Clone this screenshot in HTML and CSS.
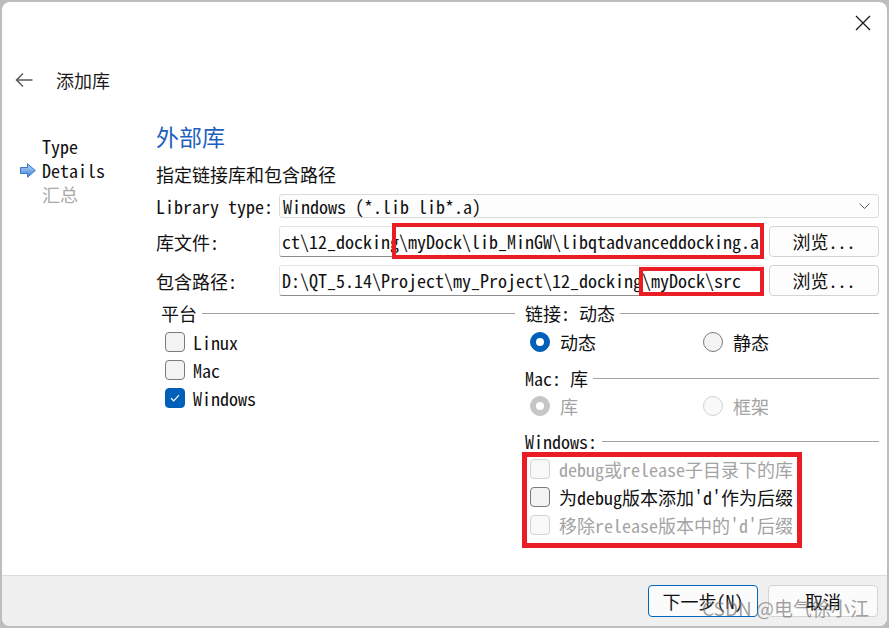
FILE: index.html
```html
<!DOCTYPE html>
<html lang="zh-CN">
<head>
<meta charset="utf-8">
<title>添加库</title>
<link rel="stylesheet" href="styles.css">
</head>
<body>
<div class="window">
  <div class="titlebar">
    <button class="close" aria-label="关闭">
      <svg width="16" height="16" viewBox="0 0 16 16"><path d="M1 1L15 15M15 1L1 15" stroke="#1a1a1a" stroke-width="1.3" fill="none"/></svg>
    </button>
  </div>
  <div class="header">
    <svg class="back" width="18" height="16" viewBox="0 0 18 16"><path d="M17.5 8H1.5M8 1.5L1.5 8L8 14.5" stroke="#5a5a5a" stroke-width="1.5" fill="none"/></svg>
    <span class="title">添加库</span>
  </div>
  <div class="main">
    <nav class="steps">
      <div class="step"><span class="marker"></span>Type</div>
      <div class="step"><span class="marker"><svg width="16" height="15" viewBox="0 0 16 15"><defs><linearGradient id="ag" x1="0" y1="0" x2="0" y2="1"><stop offset="0" stop-color="#b5d5f7"/><stop offset="1" stop-color="#3f82da"/></linearGradient></defs><path d="M0.5 4.5H7.5V0.8L15.3 7.5L7.5 14.2V10.5H0.5Z" fill="url(#ag)" stroke="#3a73c4" stroke-width="1"/></svg></span>Details</div>
      <div class="step future"><span class="marker"></span>汇总</div>
    </nav>
    <section class="content">
      <h1 class="heading">外部库</h1>
      <p class="sub">指定链接库和包含路径</p>
      <div class="form">
        <span class="label">Library type:</span>
        <div class="combo"><span>Windows (*.lib lib*.a)</span><svg width="11" height="6" viewBox="0 0 11 6"><path d="M0.5 0.5L5.5 5.5L10.5 0.5" stroke="#5f5f5f" stroke-width="1" fill="none"/></svg></div>
        <span class="label">库文件:</span>
        <div class="field"><div class="input">ct\12_docking\myDock\lib_MinGW\libqtadvanceddocking.a</div><button class="btn">浏览...</button></div>
        <span class="label">包含路径:</span>
        <div class="field"><div class="input">D:\QT_5.14\Project\my_Project\12_docking\myDock\src</div><button class="btn">浏览...</button></div>
      </div>
      <div class="groups">
        <div class="group">
          <div class="gtitle"><span>平台</span></div>
          <div class="item"><span class="box"></span>Linux</div>
          <div class="item"><span class="box"></span>Mac</div>
          <div class="item"><span class="box on"><svg width="10" height="8" viewBox="0 0 10 8"><path d="M1 4.2L3.7 6.8L9 1.2" stroke="#fff" stroke-width="1.2" fill="none"/></svg></span>Windows</div>
        </div>
        <div class="group right">
          <div class="gtitle"><span>链接: 动态</span></div>
          <div class="radios">
            <div class="item"><span class="radio on"></span>动态</div>
            <div class="item"><span class="radio"></span>静态</div>
          </div>
          <div class="gtitle next"><span>Mac: 库</span></div>
          <div class="radios">
            <div class="item disabled"><span class="radio on"></span>库</div>
            <div class="item disabled"><span class="radio"></span>框架</div>
          </div>
          <div class="gtitle next2"><span>Windows:</span></div>
          <div class="item win disabled"><span class="box"></span>debug或release子目录下的库</div>
          <div class="item win"><span class="box"></span>为debug版本添加'd'作为后缀</div>
          <div class="item win disabled"><span class="box"></span>移除release版本中的'd'后缀</div>
        </div>
      </div>
    </section>
  </div>
  <div class="footer">
    <button class="btn default">下一步(N)</button>
    <button class="btn">取消</button>
  </div>
  <div class="mark m1"></div>
  <div class="mark m2"></div>
  <div class="mark m3"></div>
  <div class="watermark">CSDN @电气徐小江</div>
</div>
</body>
</html>
```

FILE: styles.css
```css
:root {
  --mono: "Noto Sans Mono CJK SC", "Liberation Mono", "Noto Sans CJK SC", monospace;
  --sans: "Noto Sans CJK SC", "Noto Sans", sans-serif;
}
* { box-sizing: border-box; }
html, body { margin: 0; }
body {
  width: 889px;
  height: 628px;
  overflow: hidden;
  background: #bdbdbd;
  font-family: var(--mono);
  font-size: 18px;
  color: #111;
}
button { font: inherit; color: inherit; }
.window {
  position: relative;
  margin: 2px 0 0 2px;
  width: 885px;
  height: 624px;
  background: #fff;
  border-radius: 8px;
  overflow: hidden;
  display: flex;
  flex-direction: column;
}
.titlebar {
  height: 40px;
  display: flex;
  justify-content: flex-end;
  padding: 13px 16px 0 0;
}
.close {
  width: 16px; height: 16px; padding: 0; border: 0; background: none; display: block;
}
.close svg { display: block; }
.header {
  margin-top: 18px;
  height: 40px;
  display: flex;
  align-items: center;
  padding-left: 13px;
}
.back { display: block; }
.title {
  margin-left: 23px;
  font-family: var(--sans);
  font-size: 18px;
  color: #1a1a1a;
}
.main {
  flex: 1;
  display: flex;
  padding: 0 8px 0 18px;
}
.steps {
  width: 136px;
  padding-top: 34px;
}
.step {
  height: 24px;
  line-height: 24px;
  display: flex;
  align-items: center;
}
.step .marker {
  width: 22px;
  display: flex;
  align-items: center;
}
.step .marker svg { display: block; }
.step.future { color: #aaa; }
.content {
  flex: 1;
  padding-top: 21px;
}
.heading {
  margin: 0;
  font-family: var(--sans);
  font-weight: 400;
  font-size: 23px;
  line-height: 30px;
  color: #1f5fbf;
}
.sub {
  margin: 11px 0 0;
  line-height: 24px;
}
.form {
  margin-top: 8px;
  display: grid;
  grid-template-columns: 123px 1fr;
  row-gap: 8px;
  align-items: center;
}
.label { line-height: 24px; white-space: nowrap; }
.combo {
  height: 24px;
  border: 1px solid #dcdcdc;
  border-radius: 3px;
  background: #fdfdfd;
  display: flex;
  align-items: center;
  justify-content: space-between;
  padding: 0 8px 0 3px;
  line-height: 22px;
}
.combo svg { display: block; }
.field {
  display: flex;
  gap: 5px;
  height: 31px;
}
.input {
  flex: 1;
  border: 1px solid #e3e3e3;
  border-bottom: 1px solid #8c8c8c;
  border-radius: 3px;
  padding: 0 2px;
  line-height: 29px;
  white-space: nowrap;
  overflow: hidden;
}
.btn {
  width: 110px;
  height: 31px;
  border: 1px solid #d3d3d3;
  border-radius: 4px;
  background: #fdfdfd;
  padding: 0;
  line-height: 29px;
  text-align: center;
}
.groups {
  margin-top: 7px;
  display: grid;
  grid-template-columns: 1fr 1fr;
  column-gap: 5px;
}
.gtitle {
  height: 20px;
  display: flex;
  align-items: center;
  margin-bottom: 5px;
  white-space: nowrap;
}
.gtitle span { padding: 0 5px; line-height: 20px; }
.gtitle::after {
  content: "";
  flex: 1;
  border-top: 1px solid #a3a3a3;
}
.gtitle.next { margin-top: 12px; margin-bottom: 4px; }
.gtitle.next2 { margin-top: 11px; margin-bottom: 4px; }
.group .item { padding-left: 9px; }
.group.right .item { padding-left: 10px; }
.item {
  height: 28px;
  display: flex;
  align-items: center;
  gap: 8px;
  white-space: nowrap;
}
.item.disabled { color: #a3a3a3; }
.box {
  width: 20px; height: 20px;
  border: 1px solid #7a7a7a;
  border-radius: 4px;
  background: #f3f3f3;
  display: flex;
  align-items: center;
  justify-content: center;
  flex: none;
}
.box.on { background: #005fb8; border-color: #005fb8; }
.box svg { display: block; }
.item.disabled .box { border-color: #d2d2d2; background: #f9f9f9; }
.item.win { gap: 9px; }
.radios {
  display: grid;
  grid-template-columns: 173px 1fr;
}
.radios .item { gap: 10px; }
.radio {
  width: 20px; height: 20px;
  border: 1px solid #7a7a7a;
  border-radius: 50%;
  background: #f3f3f3;
  flex: none;
  display: flex;
  align-items: center;
  justify-content: center;
}
.radio.on { background: #005fb8; border-color: #005fb8; }
.radio.on::after {
  content: "";
  width: 8px; height: 8px;
  border-radius: 50%;
  background: #fff;
}
.item.disabled .radio { border-color: #d2d2d2; background: #f9f9f9; }
.item.disabled .radio.on { background: #c6c6c6; border-color: #c6c6c6; }
.footer {
  height: 51px;
  flex: none;
  background: #f0f0f0;
  border-top: 1px solid #dcdcdc;
  display: flex;
  justify-content: flex-end;
  gap: 10px;
  padding: 9px 9px 0 0;
}
.footer .btn { height: 32px; line-height: 30px; background: #fbfbfb; }
.footer .btn.default { border-color: #0067c0; }
.mark {
  position: absolute;
  border: 4px solid #ea1c24;
}
.m1 { left: 390px; top: 221px; width: 372px; height: 36px; }
.m2 { left: 637px; top: 265px; width: 125px; height: 29px; }
.m3 { left: 520px; top: 450px; width: 280px; height: 96px; border-width: 5px; }
.watermark {
  position: absolute;
  left: 700px;
  top: 593px;
  font-family: var(--sans);
  font-size: 19px;
  line-height: 26px;
  color: rgba(120, 120, 120, 0.7);
  white-space: nowrap;
  pointer-events: none;
}
```
